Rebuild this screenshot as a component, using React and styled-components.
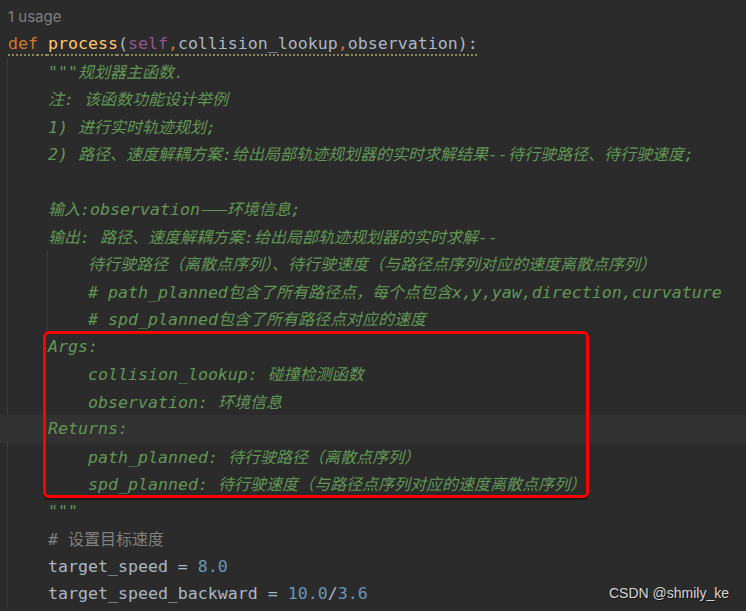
import styled, { createGlobalStyle } from "styled-components"

const Global = createGlobalStyle`
  html, body { margin: 0; padding: 0; background: #2b2b2b; }
`

const Editor = styled.div`
  position: relative;
  width: 746px;
  height: 611px;
  overflow: hidden;
  background: #2b2b2b;
  font-family: "DejaVu Sans Mono", "Liberation Mono", "Noto Sans CJK SC", monospace;
  font-size: 16.6px;
  color: #a9b7c6;
`

const Usage = styled.div`
  height: 27px;
  margin-top: 3px;
  padding-left: 8px;
  line-height: 27px;
  font-family: Inter, "Noto Sans", sans-serif;
  font-size: 15px;
  color: #7f7f7f;
`

const Line = styled.div`
  height: 27.5px;
  line-height: 27.5px;
  padding-left: ${p => 8 + (p.$indent || 0) * 10}px;
  white-space: pre;
  background: ${p => (p.$current ? "#323232" : "transparent")};
`

const Signature = styled.span`
  text-decoration: underline dotted rgba(200, 200, 130, 0.6);
  text-decoration-thickness: 2px;
  text-underline-offset: 5px;
`

const Guide = styled.div`
  background: linear-gradient(#3b3b3b, #3b3b3b) no-repeat ${p => p.$x}px 0 / 1px 100%;
`

const Doc = styled.span`
  color: #629755;
  font-style: italic;
`

const Comment = styled.span`color: #808080;`
const Kw = styled.span`color: #cc7832;`
const Fn = styled.span`color: #ffc66d;`
const Self = styled.span`color: #94558d;`
const Num = styled.span`color: #6897bb;`

const Han = styled.span`
  font-family: "Noto Sans CJK SC", sans-serif;
  font-size: 16px;
`

const Boxed = styled.div`
  position: relative;
  &::after {
    content: "";
    position: absolute;
    left: 43px;
    width: 546px;
    top: -2px;
    bottom: 0;
    box-sizing: border-box;
    border: 3px solid #ff0000;
    border-radius: 6px;
    box-shadow: 0 2px 1px rgba(0, 0, 0, 0.35);
    pointer-events: none;
  }
`

const Mark = styled.div`
  position: absolute;
  right: 17px;
  bottom: 10px;
  font-family: "Liberation Sans", Arial, sans-serif;
  font-size: 14px;
  line-height: 16px;
  color: #d6d6d6;
  text-shadow: 1px 1px 1px rgba(0, 0, 0, 0.6);
`

// wrap runs of chinese / fullwidth chars so they get the cjk font at 16px
function T({ children }) {
  const parts = String(children).split(/([\u3000-\u303f\u4e00-\u9fff\uff00-\uffef\u2014]+)/)
  return parts.map((s, i) => (i % 2 ? <Han key={i}>{s}</Han> : s))
}

function D({ indent, text, current }) {
  return (
    <Line $indent={indent} $current={current}>
      <Doc><T>{text}</T></Doc>
    </Line>
  )
}

export default function App() {
  return (
    <Editor>
      <Global />
      <Usage>1 usage</Usage>
      <Line>
        <Signature>
          <Kw>def</Kw> <Fn>process</Fn>(<Self>self</Self><Kw>,</Kw>collision_lookup<Kw>,</Kw>observation):
        </Signature>
      </Line>
      <Guide $x={7}>
        <D indent={4} text={'"""规划器主函数.'} />
        <D indent={4} text="注: 该函数功能设计举例" />
        <D indent={4} text="1) 进行实时轨迹规划;" />
        <D indent={4} text="2) 路径、速度解耦方案:给出局部轨迹规划器的实时求解结果--待行驶路径、待行驶速度;" />
        <Line />
        <D indent={4} text="输入:observation——环境信息;" />
        <D indent={4} text="输出: 路径、速度解耦方案:给出局部轨迹规划器的实时求解--" />
        <Guide $x={47}>
          <D indent={8} text="待行驶路径（离散点序列）、待行驶速度（与路径点序列对应的速度离散点序列）" />
          <D indent={8} text="# path_planned包含了所有路径点，每个点包含x,y,yaw,direction,curvature" />
          <D indent={8} text="# spd_planned包含了所有路径点对应的速度" />
        </Guide>
        <Boxed>
          <D indent={4} text="Args:" />
          <D indent={8} text="collision_lookup: 碰撞检测函数" />
          <D indent={8} text="observation: 环境信息" />
          <D indent={4} text="Returns:" current />
          <D indent={8} text="path_planned: 待行驶路径（离散点序列）" />
          <D indent={8} text="spd_planned: 待行驶速度（与路径点序列对应的速度离散点序列）" />
        </Boxed>
        <D indent={4} text={'"""'} />
        <Line $indent={4}>
          <Comment># <T>设置目标速度</T></Comment>
        </Line>
        <Line $indent={4}>
          target_speed = <Num>8.0</Num>
        </Line>
        <Line $indent={4}>
          target_speed_backward = <Num>10.0</Num>/<Num>3.6</Num>
        </Line>
      </Guide>
      <Mark>CSDN @shmily_ke</Mark>
    </Editor>
  )
}
